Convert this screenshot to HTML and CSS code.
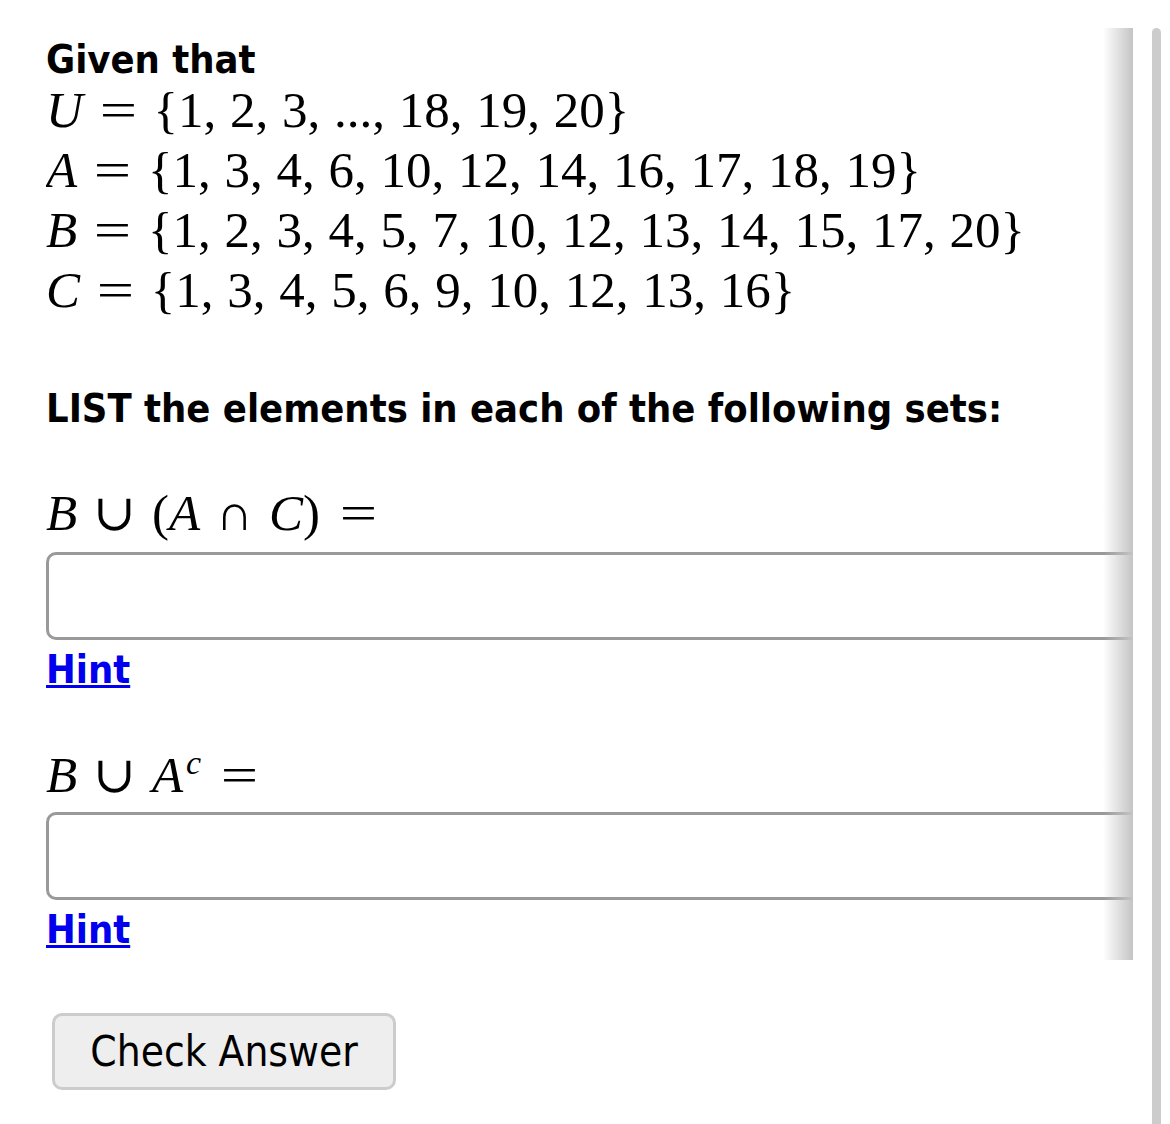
FILE: index.html
```html
<!DOCTYPE html>
<html lang="en">
  <head>
    <meta charset="UTF-8" />
    <meta name="viewport" content="width=device-width, initial-scale=1.0" />
    <title>Set Operations</title>
    <link rel="stylesheet" href="styles.css">
  </head>

  <body>
    <div class="page">
      <div class="question">
        <p class="given">Given that</p>
        <div class="math line"><i>U</i><span class="eq">=</span>{1, 2, 3, ..., 18, 19, 20}</div>
        <div class="math line"><i>A</i><span class="eq">=</span>{1, 3, 4, 6, 10, 12, 14, 16, 17, 18, 19}</div>
        <div class="math line"><i>B</i><span class="eq">=</span>{1, 2, 3, 4, 5, 7, 10, 12, 13, 14, 15, 17, 20}</div>
        <div class="math line"><i>C</i><span class="eq">=</span>{1, 3, 4, 5, 6, 9, 10, 12, 13, 16}</div>

        <p class="prompt">LIST the elements in each of the following sets:</p>

        <div class="part">
          <div class="math label"><i>B</i><span class="op">∪</span>(<i>A</i><span class="op">∩</span><i>C</i>)<span class="eq">=</span></div>
          <input class="answer" type="text" />
          <a class="hint" href="#">Hint</a>
        </div>

        <div class="part">
          <div class="math label"><i>B</i><span class="op">∪</span><i>A</i><sup>c</sup><span class="eq">=</span></div>
          <input class="answer" type="text" />
          <a class="hint" href="#">Hint</a>
        </div>
      </div>

      <button class="check" type="button">Check Answer</button>
    </div>

    <div class="scrollbar"></div>
  </body>
</html>
```

FILE: styles.css
```css
* {
  box-sizing: border-box;
}

body {
  margin: 0;
  background-color: #fff;
  color: #000;
  font-family: "DejaVu Sans Condensed", "Open Sans", sans-serif;
}

p {
  margin: 0;
}

.page {
  padding: 28px 0 0 46px;
}

/* content area is wider than the view, so it clips and fades on the right */
.question {
  position: relative;
  width: 1087px;
  overflow: hidden;
  padding-bottom: 6px;
}

.question::after {
  content: "";
  position: absolute;
  top: 0;
  right: 0;
  bottom: 0;
  width: 30px;
  background: linear-gradient(to right, rgba(255, 255, 255, 0), #c4c4c4);
}

.given {
  padding-top: 10px;
  font-size: 39.5px;
  font-weight: bold;
  line-height: 42px;
}

.math {
  font-family: "Liberation Serif", "DejaVu Serif", serif;
  font-size: 51px;
  line-height: 60px;
  white-space: nowrap;
  word-spacing: 1px;
}

.math i {
  font-style: italic;
}

.math sup {
  font-style: italic;
  font-size: 34px;
  line-height: 0;
  margin-left: 3px;
}

.eq {
  display: inline-block;
  margin: 0 21px;
  transform: scaleX(1.3);
}

.label .eq {
  margin-left: 24px;
}

.op {
  margin: 0 16px;
}

.prompt {
  margin-top: 63px;
  font-size: 39.5px;
  font-weight: bold;
  line-height: 50px;
  white-space: nowrap;
}

.part .label {
  margin-top: 50px;
}

.part + .part .label {
  margin-top: 51px;
}

.answer {
  display: block;
  width: 1200px;
  height: 88px;
  margin-top: 9px;
  border: 3px solid #999;
  border-radius: 10px;
  font-size: 36px;
  padding: 0 12px;
}

.part + .part .answer {
  margin-top: 7px;
}

.hint {
  display: inline-block;
  margin-top: 4px;
  color: #0000ee;
  font-size: 39.5px;
  font-weight: bold;
  line-height: 50px;
}

.check {
  margin: 53px 0 0 6px;
  width: 344px;
  height: 77px;
  background-color: #eee;
  border: 3px solid #ccc;
  border-radius: 10px;
  color: #000;
  font-family: "DejaVu Sans Condensed", "Open Sans", sans-serif;
  font-size: 42px;
}

.scrollbar {
  position: fixed;
  top: 28px;
  right: 9px;
  bottom: 0;
  width: 9px;
  background-color: #ccc;
  border-radius: 5px 5px 0 0;
}
```
